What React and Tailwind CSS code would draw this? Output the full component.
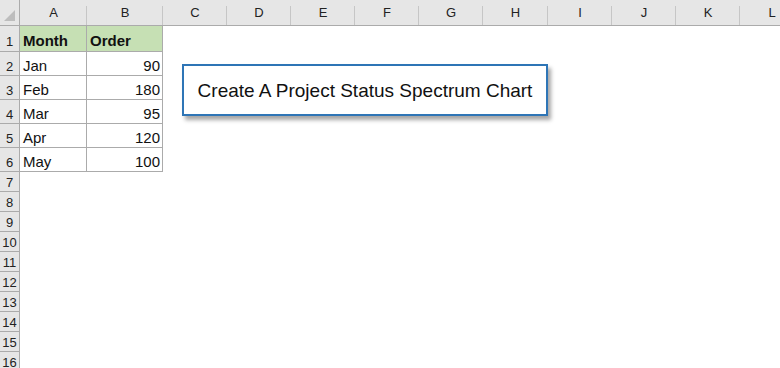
import React from 'react';

const cols = [
  { name: 'A', w: 'w-[67px]' },
  { name: 'B', w: 'w-[76px]' },
  { name: 'C', w: 'w-[64px]' },
  { name: 'D', w: 'w-[64px]' },
  { name: 'E', w: 'w-[64px]' },
  { name: 'F', w: 'w-[64px]' },
  { name: 'G', w: 'w-[64px]' },
  { name: 'H', w: 'w-[65px]' },
  { name: 'I', w: 'w-[64px]' },
  { name: 'J', w: 'w-[64px]' },
  { name: 'K', w: 'w-[64px]' },
  { name: 'L', w: 'w-[64px]' },
];

const data = [
  ['Jan', 90],
  ['Feb', 180],
  ['Mar', 95],
  ['Apr', 120],
  ['May', 100],
];

const App = () => {
  return (
    <div
      className="relative w-[780px] h-[368px] overflow-hidden bg-white text-[#111]"
      style={{ fontFamily: '"Liberation Sans", Arial, sans-serif' }}
    >
      {/* Column headers */}
      <div className="flex h-[26px] bg-[#e6e6e6] border-b border-[#ababab]">
        <div className="relative w-[20px] shrink-0 border-r border-[#ababab]">
          <div className="absolute right-[4px] bottom-[4px] w-0 h-0 border-l-[11px] border-l-transparent border-b-[11px] border-b-[#bdbdbd]" />
        </div>
        {cols.map((c) => (
          <div key={c.name} className={`${c.w} shrink-0 flex items-end pb-[3px] justify-center text-[13px] text-[#222] relative`}>
            {c.name}
            <span className="absolute right-0 top-[6px] bottom-0 w-px bg-[#c6c6c6]" />
          </div>
        ))}
      </div>

      {/* Header row */}
      <div className="flex h-[26px]">
        <div className="w-[20px] shrink-0 bg-[#e6e6e6] border-r border-b border-[#ababab] flex items-center justify-center text-[13px] text-[#222] pt-[6px]">1</div>
        <div className="w-[67px] shrink-0 bg-[#c6e0b4] border-r border-b border-[#ababab] flex items-center pl-[3px] pt-[6px] text-[15px] font-bold">Month</div>
        <div className="w-[76px] shrink-0 bg-[#c6e0b4] border-r border-b border-[#ababab] flex items-center pl-[3px] pt-[6px] text-[15px] font-bold">Order</div>
      </div>

      {data.map(([m, v], i) => (
        <div key={m} className="flex h-[24px]">
          <div className="w-[20px] shrink-0 bg-[#e6e6e6] border-r border-b border-[#ababab] flex items-center justify-center text-[13px] text-[#222] pt-[6px]">{i + 2}</div>
          <div className="w-[67px] shrink-0 border-r border-b border-[#ababab] flex items-center pl-[3px] pt-[6px] text-[15px]">{m}</div>
          <div className="w-[76px] shrink-0 border-r border-b border-[#ababab] flex items-center justify-end pr-[2px] pt-[6px] text-[15px]">{v}</div>
        </div>
      ))}

      {[7, 8, 9, 10, 11, 12, 13, 14, 15, 16].map((n) => (
        <div key={n} className="flex h-[20px]">
          <div className="w-[20px] shrink-0 bg-[#e6e6e6] border-r border-b border-[#ababab] flex items-center justify-center text-[13px] text-[#222] pt-[3px]">{n}</div>
        </div>
      ))}

      {/* Text box */}
      <div className="absolute left-[182px] top-[64px] w-[366px] h-[52px] bg-white border-2 border-[#2e75b6] shadow-[3px_4px_4px_rgba(0,0,0,0.35)] flex items-center justify-center pt-[2px] text-[19px] text-[#111]">
        Create A Project Status Spectrum Chart
      </div>
    </div>
  );
};

export default App;
